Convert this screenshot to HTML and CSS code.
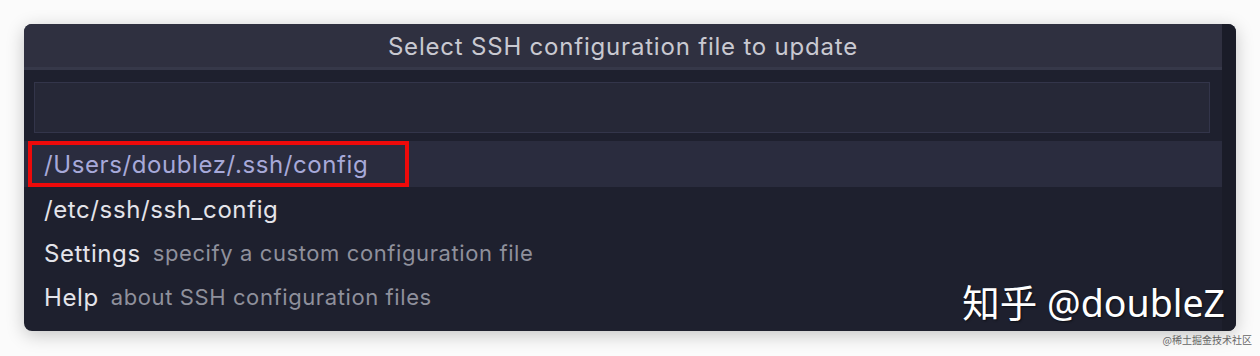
FILE: index.html
```html
<!DOCTYPE html>
<html lang="en">
<head>
    <meta charset="UTF-8">
    <title>Select SSH configuration file</title>
    <link rel="stylesheet" href="styles.css">
</head>
<body>
    <div class="panel">
        <div class="main">
            <div class="title">Select SSH configuration file to update</div>
            <div class="input-wrap">
                <div class="input"></div>
            </div>
            <ul class="list">
                <li class="row selected">
                    <span class="label">/Users/doublez/.ssh/config</span>
                    <span class="highlight"></span>
                </li>
                <li class="row"><span class="label">/etc/ssh/ssh_config</span></li>
                <li class="row"><span class="label">Settings</span><span class="desc">specify a custom configuration file</span></li>
                <li class="row"><span class="label">Help</span><span class="desc">about SSH configuration files</span></li>
            </ul>
        </div>
        <div class="strip"></div>
        <div class="mark">知乎 @doubleZ</div>
    </div>
    <div class="credit">@稀土掘金技术社区</div>
</body>
</html>
```

FILE: styles.css
```css
body {
    margin: 0;
    background-color: #fbfbfb;
    font-family: Inter, "Noto Sans", sans-serif;
    position: relative;
    height: 356px;
    overflow: hidden;
}

.panel {
    position: relative;
    display: flex;
    margin: 24px 24px 0 24px;
    width: 1212px;
    height: 307px;
    border-radius: 8px;
    background-color: #1e202e;
    box-shadow: 0 4px 18px rgba(0, 0, 0, 0.22);
    overflow: hidden;
}

.main {
    flex: 1;
    display: flex;
    flex-direction: column;
}

.strip {
    width: 14px;
    background-color: #1a1c28;
}

.title {
    height: 43px;
    line-height: 45px;
    border-bottom: 3px solid #363849;
    background-color: #2f3040;
    color: #c9c9d1;
    font-size: 24px;
    letter-spacing: 0.8px;
    text-align: center;
}

.input-wrap {
    padding: 12px 12px 8px 10px;
}

.input {
    height: 49px;
    border: 1px solid #33354a;
    background-color: #262837;
}

.list {
    list-style: none;
    margin: 0;
    padding: 0;
}

.row {
    position: relative;
    display: flex;
    align-items: center;
    height: 44px;
    padding-left: 20px;
    color: #e4e4ea;
    font-size: 24px;
    letter-spacing: 0.6px;
}

.row.selected {
    height: 46px;
    background-color: #2a2c3e;
    color: #a7a9d9;
}

.desc {
    margin-left: 12px;
    color: #8f909c;
    font-size: 22px;
    letter-spacing: 0.6px;
}

.highlight {
    position: absolute;
    left: 4px;
    top: 0;
    width: 373px;
    height: 38px;
    border: 4px solid #ee0a0a;
}

.mark {
    position: absolute;
    right: 11px;
    bottom: 3px;
    color: #ffffff;
    font-family: "Noto Sans", "Noto Sans CJK SC", sans-serif;
    font-size: 37.5px;
    text-shadow: 1px 1px 2px rgba(0, 0, 0, 0.6);
}

.credit {
    position: absolute;
    right: 8px;
    bottom: 9px;
    color: #666;
    font-family: "Noto Sans CJK SC", sans-serif;
    font-size: 10px;
}
```
